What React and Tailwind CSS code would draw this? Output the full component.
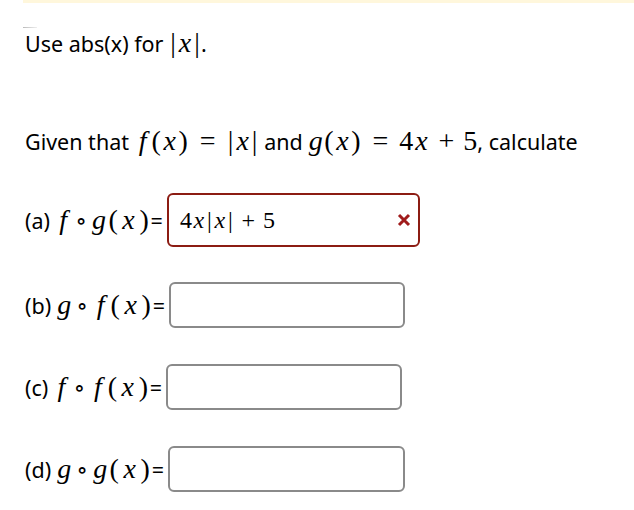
import React from "react";

const I = ({ children, w }) => (
  <span className={"[font-family:'Liberation_Serif','DejaVu_Serif',serif] italic text-[28px] leading-none text-center " + w}>{children}</span>
);
const U = ({ children, w }) => (
  <span className={"[font-family:'Liberation_Serif','DejaVu_Serif',serif] text-[28px] leading-none text-center " + w}>{children}</span>
);
const Is = ({ children, w }) => (
  <span className={"[font-family:'Liberation_Serif','DejaVu_Serif',serif] italic text-[24px] leading-none text-center " + w}>{children}</span>
);
const Us = ({ children, w }) => (
  <span className={"[font-family:'Liberation_Serif','DejaVu_Serif',serif] text-[24px] leading-none text-center " + w}>{children}</span>
);
const Circ = () => (
  <span className="[font-family:'Liberation_Serif','DejaVu_Serif',serif] text-[24px] leading-none text-center w-[13px] mx-[4px]">∘</span>
);
const T = ({ children }) => <span className="whitespace-pre">{children}</span>;

function FX({ f, wide }) {
  return (
    <>
      <I w={f === "f" ? "w-[16px]" : "w-[15px]"}>{f}</I>
      <U w={wide ? "w-[13px]" : "w-[11px]"}>(</U>
      <I w={wide ? "w-[18px]" : "w-[16px]"}>x</I>
      <U w={wide ? "w-[13px]" : "w-[11px]"}>)</U>
    </>
  );
}

function Label({ tag, a, b }) {
  return (
    <span className="flex items-baseline">
      <T>({tag}) </T>
      <I w="w-[15px]">{a}</I>
      <Circ />
      <FX f={b} wide />
      <T>=</T>
    </span>
  );
}

export default function App() {
  return (
    <div className="w-[634px] h-[510px] bg-white text-black text-[21.5px] leading-none">
      <div className="ml-[23px] h-[3px] bg-[#fff7dc]" />
      <div className="ml-[23px] mt-[24px] w-[14px] h-[1px] bg-gradient-to-r from-[#bbb] to-[#eee]" />
      <div className="ml-[25px] mt-[1px] flex items-baseline">
        <T>Use abs(x) for </T>
        <U w="w-[8px]">|</U>
        <I w="w-[16px]">x</I>
        <U w="w-[8px]">|</U>
        <T>.</T>
      </div>
      <div className="ml-[25px] mt-[70px] flex items-baseline">
        <T>Given that </T>
        <FX f="f" />
        <U w="w-[22px] mx-[8px]">=</U>
        <U w="w-[8px]">|</U>
        <I w="w-[16px]">x</I>
        <U w="w-[8px]">|</U>
        <T> and </T>
        <FX f="g" />
        <U w="w-[22px] mx-[8px]">=</U>
        <U w="w-[14px]">4</U>
        <I w="w-[16px]">x</I>
        <U w="w-[22px] mx-[6px]">+</U>
        <U w="w-[14px]">5</U>
        <T>, calculate</T>
      </div>

      <div className="ml-[25px] mt-[38px] flex items-center">
        <Label tag="a" a="f" b="g" />
        <div className="ml-[4px] w-[253px] h-[54px] border-2 border-[#8c1c13] rounded-[6px] flex items-center justify-between pl-[11px] pr-[7px]">
          <span className="flex items-baseline">
            <Us w="w-[12px]">4</Us>
            <Is w="w-[14px]">x</Is>
            <Us w="w-[7px]">|</Us>
            <Is w="w-[14px]">x</Is>
            <Us w="w-[7px]">|</Us>
            <Us w="w-[19px] mx-[5px]">+</Us>
            <Us w="w-[12px]">5</Us>
          </span>
          <svg width="14" height="14" viewBox="0 0 14 14">
            <path d="M2 2 L12 12 M12 2 L2 12" stroke="#a01c1c" strokeWidth="3" />
          </svg>
        </div>
      </div>

      <div className="ml-[25px] mt-[35px] flex items-center">
        <Label tag="b" a="g" b="f" />
        <div className="ml-[4px] w-[236px] h-[46px] border-2 border-[#8a8a8a] rounded-[6px]" />
      </div>
      <div className="ml-[25px] mt-[36px] flex items-center">
        <Label tag="c" a="f" b="f" />
        <div className="ml-[4px] w-[236px] h-[46px] border-2 border-[#8a8a8a] rounded-[6px]" />
      </div>
      <div className="ml-[25px] mt-[36px] flex items-center">
        <Label tag="d" a="g" b="g" />
        <div className="ml-[4px] w-[237px] h-[46px] border-2 border-[#8a8a8a] rounded-[6px]" />
      </div>
    </div>
  );
}
